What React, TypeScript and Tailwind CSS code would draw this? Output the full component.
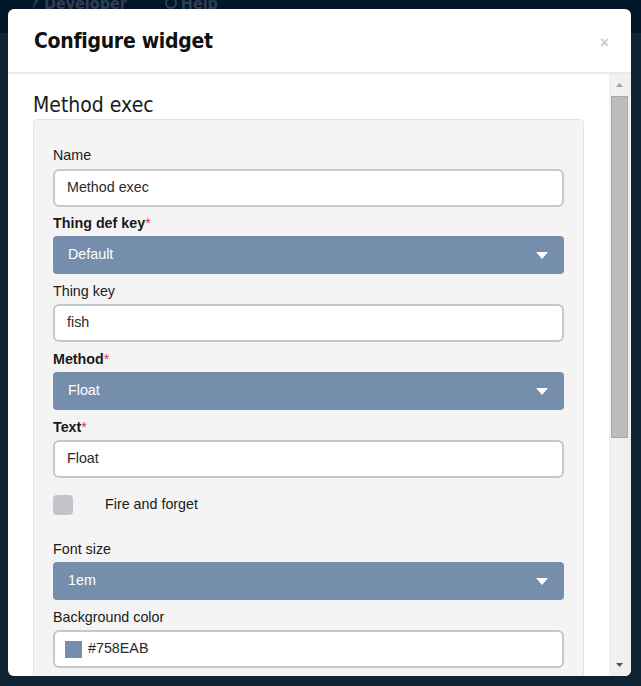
import React from "react";

const Label = ({ text, req }: { text: string; req?: boolean }) => (
  <div className={`h-[20px] leading-[20px] text-[14.3px] text-[#1a1a1a] ${req ? "font-bold" : ""}`}>
    {text}
    {req && <span className="text-[#e0364f] font-normal">*</span>}
  </div>
);

const TextInput = ({ value, children }: { value: string; children?: React.ReactNode }) => (
  <div className="h-[38px] bg-white border-2 border-[#c4c8cc] rounded-[6px] flex items-center px-[12px] text-[14.3px] text-[#2a2a2a]">
    {children}
    {value}
  </div>
);

const Select = ({ value }: { value: string }) => (
  <div className="h-[38px] bg-[#758EAB] rounded-[4px] flex items-center justify-between pl-[15px] pr-[16px] text-[14.3px] text-white">
    <span>{value}</span>
    <svg width="12" height="7" viewBox="0 0 12 7">
      <path d="M0 0 L12 0 L6 7 Z" fill="#ffffff" />
    </svg>
  </div>
);

export default function App() {
  return (
    <div
      className="relative w-[641px] h-[686px] bg-[#0e2334] overflow-hidden"
      style={{ fontFamily: '"Liberation Sans", Arial, sans-serif' }}
    >
      <div className="h-[33px] bg-[#031627] flex items-start pl-[30px] gap-[38px] text-[#2f3f50] font-bold text-[16px] leading-[16px] pt-0">
        <div className="flex items-center gap-[4px] -mt-[4px]" style={{ fontFamily: '"DejaVu Sans Condensed", "DejaVu Sans", sans-serif' }}>
          <svg width="10" height="14" viewBox="0 0 10 14">
            <path d="M2 14 L6 6 L9 3 L8 1 L5 3 L4 6 Z" fill="#2f3f50" />
          </svg>
          <span>Developer</span>
        </div>
        <div className="flex items-center gap-[4px] -mt-[4px]" style={{ fontFamily: '"DejaVu Sans Condensed", "DejaVu Sans", sans-serif' }}>
          <svg width="12" height="14" viewBox="0 0 12 14">
            <circle cx="6" cy="6" r="5" stroke="#2f3f50" strokeWidth="2" fill="none" />
          </svg>
          <span>Help</span>
        </div>
      </div>

      <div className="absolute left-[8px] top-[9px] w-[623px] h-[667px] bg-white rounded-[6px] flex flex-col overflow-hidden">
        <div className="h-[65px] shrink-0 border-b-2 border-[#e6e9eb] flex items-center justify-between pl-[26px] pr-[22px]">
          <div
            className="text-[21px] font-bold text-[#111] tracking-[-0.3px] pt-[2px]"
            style={{ fontFamily: '"DejaVu Sans Condensed", "DejaVu Sans", sans-serif', fontStretch: "condensed" }}
          >
            Configure widget
          </div>
          <div className="text-[#c8cdd1] text-[16px] font-bold leading-none pt-[4px]">×</div>
        </div>

        <div className="flex flex-1 min-h-0">
          <div className="flex-1 min-w-0 px-[25px] pt-[18px] overflow-hidden">
            <div
              className="text-[21px] leading-[26px] text-[#1a1a1a] font-light mb-[1px]"
              style={{ fontFamily: '"DejaVu Sans Condensed", "DejaVu Sans", sans-serif', fontStretch: "condensed" }}
            >
              Method exec
            </div>
            <div className="bg-[#f4f4f4] border border-[#e4e4e4] rounded-[4px] px-[19px] pt-[25px] pb-[20px]">
              <div className="flex flex-col">
                <Label text="Name" />
                <div className="mt-[4px] mb-[6px]"><TextInput value="Method exec" /></div>
                <Label text="Thing def key" req />
                <div className="mt-[3px] mb-[7px]"><Select value="Default" /></div>
                <Label text="Thing key" />
                <div className="mt-[3px] mb-[7px]"><TextInput value="fish" /></div>
                <Label text="Method" req />
                <div className="mt-[3px] mb-[7px]"><Select value="Float" /></div>
                <Label text="Text" req />
                <div className="mt-[3px]"><TextInput value="Float" /></div>
                <div className="flex items-center mt-[17px] h-[20px]">
                  <div className="w-[20px] h-[20px] rounded-[4px] bg-[#c1c5ca]" />
                  <span className="ml-[32px] text-[14.3px] text-[#1a1a1a]">Fire and forget</span>
                </div>
                <div className="mt-[24px]"><Label text="Font size" /></div>
                <div className="mt-[3px] mb-[7px]"><Select value="1em" /></div>
                <Label text="Background color" />
                <div className="mt-[3px]">
                  <TextInput value="#758EAB">
                    <span className="w-[17px] h-[17px] bg-[#758EAB] -ml-[2px] mr-[6px] inline-block" />
                  </TextInput>
                </div>
              </div>
            </div>
          </div>

          <div className="w-[22px] shrink-0 bg-[#f0f0f0] flex flex-col items-start pl-[2px] pr-[3px]">
            <div className="h-[22px] w-[17px] flex items-center justify-center">
              <svg width="7" height="4" viewBox="0 0 7 4"><path d="M0 4 L3.5 0 L7 4 Z" fill="#a3a3a3" /></svg>
            </div>
            <div className="w-[17px] h-[342px] bg-[#bcbcbc] border border-[#a8a8a8]" />
            <div className="flex-1" />
            <div className="h-[22px] w-[17px] flex items-center justify-center">
              <svg width="7" height="4" viewBox="0 0 7 4"><path d="M0 0 L7 0 L3.5 4 Z" fill="#505050" /></svg>
            </div>
          </div>
        </div>
      </div>
    </div>
  );
}
